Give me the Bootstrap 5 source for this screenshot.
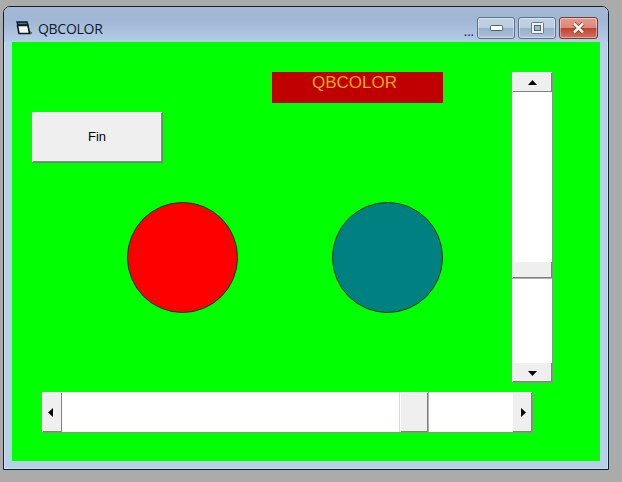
<!DOCTYPE html>
<html lang="en">
<head>
<meta charset="utf-8">
<title>QBCOLOR</title>
<link href="https://cdn.jsdelivr.net/npm/bootstrap@5.3.0/dist/css/bootstrap.min.css" rel="stylesheet">
<style>
html,body{height:100%;}
body{background:#ababab;overflow:hidden;font-family:"Liberation Sans",Arial,sans-serif;}
.vb-desk{padding:6px 0 0 3px;}
.vb-win{width:606px;height:464px;border:1px solid #10202c;border-radius:7px 7px 0 0;background:#b6d0e8;box-shadow:inset 0 0 0 1px rgba(255,255,255,.3);padding:0 8px 8px 8px;}
.vb-title{height:35px;flex:none;margin:0 -8px;padding:7px 10px 0 12px;border-radius:6px 6px 0 0;background:linear-gradient(#a3b8d4,#a0b7d5 35%,#a9c0dc 65%,#b5cde8);}
.vb-caption{font-family:"Open Sans","Noto Sans",sans-serif;font-size:14px;line-height:18px;color:#0e1a2a;letter-spacing:-.02em;margin-left:5px;padding-top:2px;}
.vb-dots{font-family:"Open Sans",sans-serif;font-size:13px;line-height:14px;color:#101c2c;margin-right:3px;padding-top:5px;}
.vb-caps{gap:3px;}
.vb-cap{width:38px;height:22px;border:1px solid #5f7287;border-radius:3px;box-shadow:inset 0 0 0 1px rgba(255,255,255,.4);background:linear-gradient(#c2d2e4 0,#bccde0 50%,#98aec9 52%,#adc2db 100%);padding:0;}
.vb-cap-close{width:39px;border-color:#7c3a32;background:linear-gradient(#e49a8c 0,#dd8777 48%,#bf432c 52%,#d2735f 100%);}
.vb-form{flex:1 1 auto;background:#0f0;}
.vb-label{position:absolute;left:260px;top:30px;width:171px;height:31px;background:#c00000;color:#e8a81c;font-size:17px;line-height:20px;padding:1px 46px 0 40px;white-space:nowrap;}
.vb-btn{position:absolute;left:20px;top:70px;width:130px;height:50px;padding:0;border:0;border-radius:0;background:#efefef;color:#000;font-family:"Liberation Sans",Arial,sans-serif;font-size:13px;box-shadow:inset 1px 1px 0 #fff,inset -1px -1px 0 #8a8f8a,1px 1px 0 #5f8f5f;}
.vb-disc{position:absolute;top:160px;width:111px;height:111px;border-radius:50%;border:1px solid #0b3b0b;}
.vb-red{left:115px;background:#f00;}
.vb-teal{left:320px;background:#008080;}
.vb-sb{position:absolute;background:#fff;box-shadow:1px 1px 0 #7f9f7f;}
.vb-sbv{left:500px;top:30px;width:40px;height:310px;flex-direction:column;}
.vb-sbh{left:30px;top:350px;width:490px;height:40px;}
.vb-sbtn{flex:none;background:#efefef;border:0;border-radius:0;padding:0;box-shadow:inset 1px 1px 0 #fff,inset -1px -1px 0 #808080;}
.vb-sbv .vb-sbtn{height:20px;width:40px;}
.vb-sbh .vb-sbtn{width:20px;height:40px;}
.vb-thumb{position:absolute;background:#efefef;box-shadow:inset 1px 1px 0 #fff,inset -1px -1px 0 #7f7f7f,0 1px 0 #b0b0b0;}
.vb-sbv .vb-thumb{left:0;top:189px;width:40px;height:17px;}
.vb-sbh .vb-thumb{left:358px;top:0;width:28px;height:40px;box-shadow:inset 1px 1px 0 #fff,inset -1px -1px 0 #7f7f7f,1px 0 0 #b0b0b0,-1px 0 0 #d8d8d8;}
.vb-track{flex:1 1 auto;}
.vb-arr-l{margin-right:3px;}
.vb-arr-r{margin-left:3px;}
.vb-arr-d{margin-top:3px;}
svg{display:block;}
</style>
</head>
<body>
<div class="vb-desk">
  <div class="vb-win d-flex flex-column">
    <div class="vb-title d-flex align-items-center">
      <svg width="17" height="14" viewBox="0 0 17 14" aria-hidden="true"><path d="M1 1h10l1 3H2z" fill="#2f7f86" stroke="#0e1a2a" stroke-width="1.4"/><path d="M1.500 4.500h10.500l1.500 8H3z" fill="#f6f6f0" stroke="#0e1a2a" stroke-width="1.6"/><path d="M14 10l2.500 2-2.500 1.500z" fill="#555"/></svg>
      <span class="vb-caption">QBCOLOR</span>
      <span class="vb-dots ms-auto">...</span>
      <div class="vb-caps d-flex">
        <button class="vb-cap d-flex align-items-center justify-content-center" aria-label="Minimize"><svg width="13" height="6" viewBox="0 0 13 6"><rect x=".5" y=".5" width="12" height="5" rx="1" fill="#fff" stroke="#4f5f73"/></svg></button>
        <button class="vb-cap d-flex align-items-center justify-content-center" aria-label="Maximize"><svg width="13" height="12" viewBox="0 0 13 12"><rect x=".5" y=".5" width="12" height="11" rx="1" fill="#eef2f6" stroke="#6a7a8c"/><rect x="3.5" y="3.5" width="6" height="5" fill="#a9b9cc" stroke="#4f5f73"/></svg></button>
        <button class="vb-cap vb-cap-close d-flex align-items-center justify-content-center" aria-label="Close"><svg width="13" height="12" viewBox="0 0 13 12"><path d="M2 1.500l9 9M11 1.500l-9 9" stroke="#6b3a34" stroke-width="4"/><path d="M2 1.500l9 9M11 1.500l-9 9" stroke="#f6f0ee" stroke-width="2.600"/></svg></button>
      </div>
    </div>
    <div class="vb-form position-relative">
      <div class="vb-label">QBCOLOR</div>
      <button class="vb-btn">Fin</button>
      <div class="vb-disc vb-red"></div>
      <div class="vb-disc vb-teal"></div>
      <div class="vb-sb vb-sbv d-flex">
        <div class="vb-sbtn d-flex align-items-center justify-content-center"><svg width="9" height="5" viewBox="0 0 9 5"><path d="M4.500 0L9 5H0z"/></svg></div>
        <div class="vb-track"></div>
        <div class="vb-thumb"></div>
        <div class="vb-sbtn d-flex align-items-center justify-content-center"><svg class="vb-arr-d" width="9" height="5" viewBox="0 0 9 5"><path d="M0 0h9L4.500 5z"/></svg></div>
      </div>
      <div class="vb-sb vb-sbh d-flex">
        <div class="vb-sbtn d-flex align-items-center justify-content-center"><svg class="vb-arr-l" width="5" height="9" viewBox="0 0 5 9"><path d="M5 0v9L0 4.500z"/></svg></div>
        <div class="vb-track"></div>
        <div class="vb-thumb"></div>
        <div class="vb-sbtn d-flex align-items-center justify-content-center"><svg class="vb-arr-r" width="5" height="9" viewBox="0 0 5 9"><path d="M0 0v9l5-4.500z"/></svg></div>
      </div>
    </div>
  </div>
</div>
<script src="https://cdn.jsdelivr.net/npm/bootstrap@5.3.0/dist/js/bootstrap.bundle.min.js"></script>
</body>
</html>
